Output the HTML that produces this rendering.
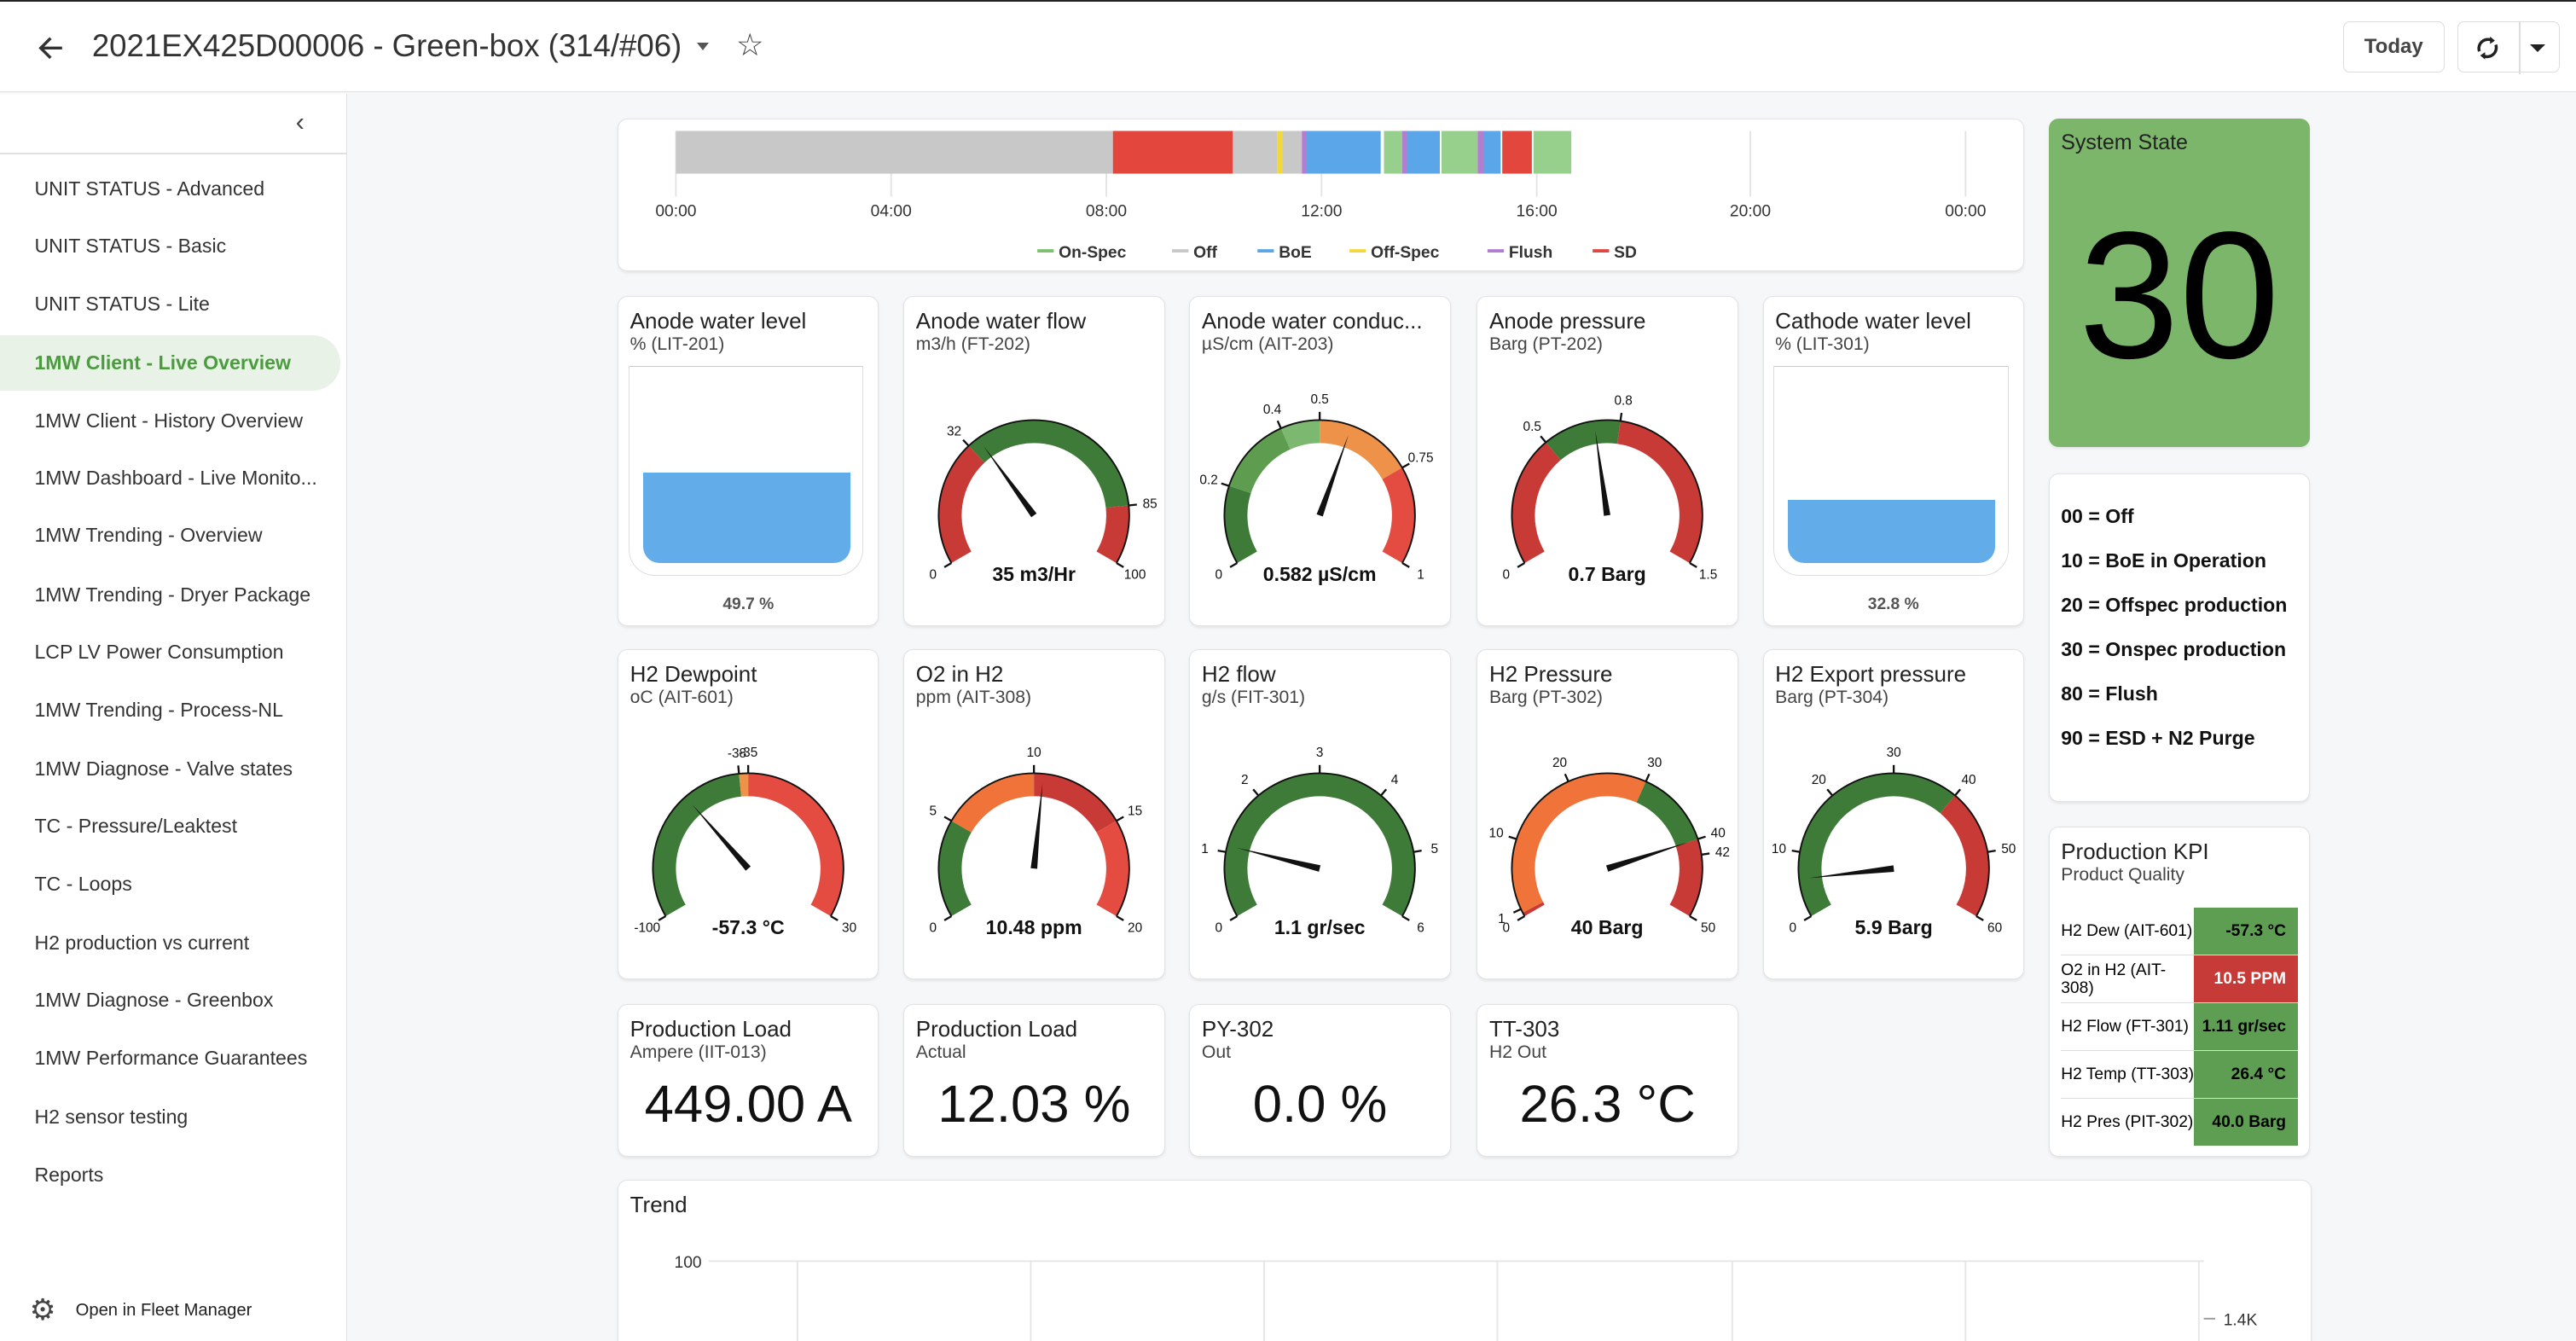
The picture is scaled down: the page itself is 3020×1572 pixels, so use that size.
<!DOCTYPE html>
<html><head><meta charset="utf-8">
<style>
html,body{margin:0;padding:0;}
body{width:3020px;height:1572px;overflow:hidden;background:#f6f7f9;font-family:"Liberation Sans",sans-serif;}
#z{zoom:1.92602;width:1568px;height:816px;position:relative;overflow:hidden;background:#f6f7f9;}
.abs{position:absolute;}
.hdr{left:0;top:0;width:1568px;height:56px;background:#fff;border-top:1.5px solid #222;border-bottom:1px solid #e0e0e0;box-sizing:border-box;}
.side{left:0;top:57px;width:211px;height:760px;background:#fff;border-right:1px solid #e0e0e0;}
.side .it{position:absolute;left:21px;font-size:12px;color:#333;}
.card{position:absolute;background:#fff;border:1px solid #e2e3e6;border-radius:6px;box-shadow:0 1px 2px rgba(0,0,0,.08);box-sizing:border-box;}
.t{position:absolute;left:7px;top:7px;font-size:13.5px;color:#222;white-space:nowrap;}
.s{position:absolute;left:7px;top:23px;font-size:11px;color:#444;white-space:nowrap;}
.big{position:absolute;left:0;width:100%;text-align:center;top:42px;font-size:32px;color:#111;}
.leg div{font-size:12px;font-weight:bold;color:#111;position:absolute;left:7px;}
table{border-collapse:collapse;table-layout:fixed;}
td{padding:0;}
td.v{font-weight:bold;text-align:right;padding-right:7px;background:#5d9e52;}
</style></head><body><div id="z">
<div class="abs hdr">
 <svg class="abs" style="left:22px;top:19px" width="18" height="18" viewBox="0 0 18 18"><path d="M16 9H3M9 3L3 9l6 6" stroke="#333" stroke-width="1.8" fill="none"/></svg>
 <div class="abs" style="left:56px;top:16px;font-size:19px;color:#333;">2021EX425D00006 - Green-box (314/#06)</div>
 <div class="abs" style="left:424px;top:25px;width:0;height:0;border-left:4px solid transparent;border-right:4px solid transparent;border-top:5px solid #555;"></div>
 <div class="abs" style="left:448px;top:15px;font-size:19px;color:#444;">☆</div>
 <div class="abs" style="left:1426px;top:12px;width:61px;height:30px;border:1px solid #ddd;border-radius:4px;font-size:12.5px;font-weight:bold;color:#444;text-align:center;line-height:30px;">Today</div>
 <div class="abs" style="left:1496px;top:12px;width:61px;height:30px;border:1px solid #ddd;border-radius:4px;"></div>
 <div class="abs" style="left:1533px;top:12px;width:1px;height:32px;background:#ddd;"></div>
 <svg class="abs" style="left:1505px;top:19px" width="18" height="18" viewBox="0 0 18 18"><path d="M4 11A5.5 5.5 0 0 1 12 4.5M14 7A5.5 5.5 0 0 1 6 13.5" stroke="#222" stroke-width="1.8" fill="none"/><path d="M10.5 2l3 2.5-3 2z M7.5 16l-3-2.5 3-2z" fill="#222"/></svg>
 <div class="abs" style="left:1540px;top:26px;width:0;height:0;border-left:5px solid transparent;border-right:5px solid transparent;border-top:5px solid #222;"></div>
</div>
<div class="abs side">
 <div class="abs" style="left:180px;top:8px;font-size:16px;color:#444;">‹</div>
 <div class="abs" style="left:0;top:36px;width:211px;height:1px;background:#e0e0e0;"></div>
 <div class="abs" style="left:0;top:147px;width:207px;height:34px;background:#e8f2e6;border-radius:0 17px 17px 0;"></div>
 <div class="it" style="top:51px">UNIT STATUS - Advanced</div>
 <div class="it" style="top:86px">UNIT STATUS - Basic</div>
 <div class="it" style="top:121px">UNIT STATUS - Lite</div>
 <div class="it" style="top:157px;color:#4a9c3e;font-weight:bold">1MW Client - Live Overview</div>
 <div class="it" style="top:192px">1MW Client - History Overview</div>
 <div class="it" style="top:227px">1MW Dashboard - Live Monito...</div>
 <div class="it" style="top:262px">1MW Trending - Overview</div>
 <div class="it" style="top:298px">1MW Trending - Dryer Package</div>
 <div class="it" style="top:333px">LCP LV Power Consumption</div>
 <div class="it" style="top:368px">1MW Trending - Process-NL</div>
 <div class="it" style="top:404px">1MW Diagnose - Valve states</div>
 <div class="it" style="top:439px">TC - Pressure/Leaktest</div>
 <div class="it" style="top:474px">TC - Loops</div>
 <div class="it" style="top:510px">H2 production vs current</div>
 <div class="it" style="top:545px">1MW Diagnose - Greenbox</div>
 <div class="it" style="top:580px">1MW Performance Guarantees</div>
 <div class="it" style="top:616px">H2 sensor testing</div>
 <div class="it" style="top:651px">Reports</div>
 <div class="abs" style="left:18px;top:730px;font-size:18px;color:#444;">⚙</div>
 <div class="abs" style="left:46px;top:735px;font-size:10.5px;color:#222;">Open in Fleet Manager</div>
</div>

<!-- timeline -->
<div class="card" style="left:376px;top:72px;width:856px;height:93px;">
<svg class="abs" style="left:0;top:0" width="856" height="93">
 <g stroke="#e4e4e4" stroke-width="1">
  <line x1="35" y1="7" x2="35" y2="47"/><line x1="166" y1="7" x2="166" y2="47"/><line x1="297" y1="7" x2="297" y2="47"/><line x1="428" y1="7" x2="428" y2="47"/><line x1="559" y1="7" x2="559" y2="47"/><line x1="689" y1="7" x2="689" y2="47"/><line x1="820" y1="7" x2="820" y2="47"/>
 </g>
 <g>
  <rect x="35" y="7" width="266" height="26" fill="#c8c8c8"/>
  <rect x="301" y="7" width="73" height="26" fill="#e2463d"/>
  <rect x="374" y="7" width="27" height="26" fill="#c8c8c8"/>
  <rect x="401" y="7" width="3" height="26" fill="#f3d83c"/>
  <rect x="404" y="7" width="12" height="26" fill="#c8c8c8"/>
  <rect x="416" y="7" width="3" height="26" fill="#b27fd0"/>
  <rect x="419" y="7" width="45" height="26" fill="#5aa6e8"/>
  <rect x="466" y="7" width="11" height="26" fill="#96d08c"/>
  <rect x="477" y="7" width="3" height="26" fill="#b27fd0"/>
  <rect x="480" y="7" width="20" height="26" fill="#5aa6e8"/>
  <rect x="501" y="7" width="22" height="26" fill="#96d08c"/>
  <rect x="523" y="7" width="4" height="26" fill="#b27fd0"/>
  <rect x="527" y="7" width="10" height="26" fill="#5aa6e8"/>
  <rect x="538" y="7" width="18" height="26" fill="#e2463d"/>
  <rect x="557" y="7" width="23" height="26" fill="#96d08c"/>
 </g>
 <g font-size="10" fill="#333" text-anchor="middle">
  <text x="35" y="59">00:00</text><text x="166" y="59">04:00</text><text x="297" y="59">08:00</text><text x="428" y="59">12:00</text><text x="559" y="59">16:00</text><text x="689" y="59">20:00</text><text x="820" y="59">00:00</text>
 </g>
 <g font-size="10" font-weight="bold" fill="#333">
  <line x1="255" y1="80" x2="265" y2="80" stroke="#7cc16e" stroke-width="2"/><text x="268" y="84">On-Spec</text>
  <line x1="337" y1="80" x2="347" y2="80" stroke="#c8c8c8" stroke-width="2"/><text x="350" y="84">Off</text>
  <line x1="389" y1="80" x2="399" y2="80" stroke="#5aa6e8" stroke-width="2"/><text x="402" y="84">BoE</text>
  <line x1="445" y1="80" x2="455" y2="80" stroke="#f3d83c" stroke-width="2"/><text x="458" y="84">Off-Spec</text>
  <line x1="529" y1="80" x2="539" y2="80" stroke="#b27fd0" stroke-width="2"/><text x="542" y="84">Flush</text>
  <line x1="593" y1="80" x2="603" y2="80" stroke="#e2463d" stroke-width="2"/><text x="606" y="84">SD</text>
 </g>
</svg>
</div>

<!-- system state -->
<div class="card" style="left:1247px;top:72px;width:159px;height:200px;background:#7bb66b;border-color:#7bb66b;">
 <div class="t" style="font-size:13px">System State</div>
 <div class="abs" style="left:0;width:100%;text-align:center;top:42px;font-size:110px;color:#000;line-height:130px;">30</div>
</div>
<div class="card leg" style="left:1247px;top:288px;width:159px;height:200px;">
 <div style="top:19px">00 = Off</div><div style="top:46px">10 = BoE in Operation</div><div style="top:73px">20 = Offspec production</div><div style="top:100px">30 = Onspec production</div><div style="top:127px">80 = Flush</div><div style="top:154px">90 = ESD + N2 Purge</div>
</div>
<div class="card" style="left:1247px;top:503px;width:159px;height:201px;">
 <div class="t">Production KPI</div><div class="s">Product Quality</div>
 <table class="abs" style="left:7px;top:49px;width:144px;font-size:10px;line-height:11px;">
  <colgroup><col style="width:81px"><col style="width:63px"></colgroup>
  <tr style="height:29px;border-bottom:1px solid #ddd"><td>H2 Dew (AIT-601)</td><td class="v">-57.3 °C</td></tr>
  <tr style="height:29px;border-bottom:1px solid #ddd"><td>O2 in H2 (AIT-308)</td><td class="v" style="background:#c63a37;color:#fff;">10.5 PPM</td></tr>
  <tr style="height:29px;border-bottom:1px solid #ddd"><td>H2 Flow (FT-301)</td><td class="v">1.11 gr/sec</td></tr>
  <tr style="height:29px;border-bottom:1px solid #ddd"><td>H2 Temp (TT-303)</td><td class="v">26.4 °C</td></tr>
  <tr style="height:29px"><td>H2 Pres (PIT-302)</td><td class="v">40.0 Barg</td></tr>
 </table>
</div>

<!-- row1 -->
<div class="card" style="left:376px;top:180px;width:159px;height:201px;"><div class="t">Anode water level</div><div class="s">% (LIT-201)</div>
 <div class="abs" style="left:6px;top:42px;width:143px;height:128px;border:1px solid #ddd;border-top-color:#ccc;border-radius:0 0 16px 16px;box-sizing:border-box;"></div>
 <div class="abs" style="left:15px;top:107px;width:126px;height:55px;background:#62acea;border-radius:0 0 10px 10px;"></div>
 <div class="abs" style="left:0;width:100%;text-align:center;top:182px;font-size:10px;color:#555;font-weight:bold">49.7 %</div></div>
<div class="card" id="g1" style="left:550px;top:180px;width:159px;height:201px;"><div class="t">Anode water flow</div><div class="s">m3/h (FT-202)</div></div>
<div class="card" id="g2" style="left:724px;top:180px;width:159px;height:201px;"><div class="t">Anode water conduc...</div><div class="s">µS/cm (AIT-203)</div></div>
<div class="card" id="g3" style="left:899px;top:180px;width:159px;height:201px;"><div class="t">Anode pressure</div><div class="s">Barg (PT-202)</div></div>
<div class="card" style="left:1073px;top:180px;width:159px;height:201px;"><div class="t">Cathode water level</div><div class="s">% (LIT-301)</div>
 <div class="abs" style="left:6px;top:42px;width:143px;height:128px;border:1px solid #ddd;border-top-color:#ccc;border-radius:0 0 16px 16px;box-sizing:border-box;"></div>
 <div class="abs" style="left:15px;top:124px;width:126px;height:38px;background:#62acea;border-radius:0 0 10px 10px;"></div>
 <div class="abs" style="left:0;width:100%;text-align:center;top:182px;font-size:10px;color:#555;font-weight:bold">32.8 %</div></div>
<!-- row2 -->
<div class="card" id="g4" style="left:376px;top:395px;width:159px;height:201px;"><div class="t">H2 Dewpoint</div><div class="s">oC (AIT-601)</div></div>
<div class="card" id="g5" style="left:550px;top:395px;width:159px;height:201px;"><div class="t">O2 in H2</div><div class="s">ppm (AIT-308)</div></div>
<div class="card" id="g6" style="left:724px;top:395px;width:159px;height:201px;"><div class="t">H2 flow</div><div class="s">g/s (FIT-301)</div></div>
<div class="card" id="g7" style="left:899px;top:395px;width:159px;height:201px;"><div class="t">H2 Pressure</div><div class="s">Barg (PT-302)</div></div>
<div class="card" id="g8" style="left:1073px;top:395px;width:159px;height:201px;"><div class="t">H2 Export pressure</div><div class="s">Barg (PT-304)</div></div>
<!-- row3 -->
<div class="card" style="left:376px;top:611px;width:159px;height:93px;"><div class="t">Production Load</div><div class="s">Ampere (IIT-013)</div><div class="big">449.00 A</div></div>
<div class="card" style="left:550px;top:611px;width:159px;height:93px;"><div class="t">Production Load</div><div class="s">Actual</div><div class="big">12.03 %</div></div>
<div class="card" style="left:724px;top:611px;width:159px;height:93px;"><div class="t">PY-302</div><div class="s">Out</div><div class="big">0.0 %</div></div>
<div class="card" style="left:899px;top:611px;width:159px;height:93px;"><div class="t">TT-303</div><div class="s">H2 Out</div><div class="big">26.3 °C</div></div>
<!-- trend -->
<div class="card" style="left:376px;top:718px;width:1031px;height:120px;"><div class="t">Trend</div>
<svg class="abs" style="left:0;top:0" width="1031" height="120">
 <text x="34" y="53" font-size="10" fill="#333">100</text>
 <line x1="55" y1="49" x2="965" y2="49" stroke="#e6e6e6"/>
 <g stroke="#e6e6e6"><line x1="109" y1="49" x2="109" y2="120"/><line x1="251" y1="49" x2="251" y2="120"/><line x1="393" y1="49" x2="393" y2="120"/><line x1="535" y1="49" x2="535" y2="120"/><line x1="678" y1="49" x2="678" y2="120"/><line x1="820" y1="49" x2="820" y2="120"/><line x1="962" y1="49" x2="962" y2="120"/></g>
 <line x1="965" y1="84" x2="972" y2="84" stroke="#999"/>
 <text x="977" y="88" font-size="10" fill="#333">1.4K</text>
</svg></div>

<script>
var G=[
 ["g1",133,0,100,[[0,32,"#c83a36"],[32,85,"#3f7b38"],[85,100,"#c83a36"]],35,[0,32,85,100],"35 m3/Hr"],
 ["g2",133,0,1,[[0,0.2,"#3f7b38"],[0.2,0.4,"#5e9d4f"],[0.4,0.5,"#7cb870"],[0.5,0.75,"#ef9249"],[0.75,1,"#e54c41"]],0.582,[0,0.2,0.4,0.5,0.75,1],"0.582 µS/cm"],
 ["g3",133,0,1.5,[[0,0.5,"#c83a36"],[0.5,0.8,"#3f7b38"],[0.8,1.5,"#c83a36"]],0.7,[0,0.5,0.8,1.5],"0.7 Barg"],
 ["g4",133,-100,30,[[-100,-38,"#3f7b38"],[-38,-35,"#ef9249"],[-35,30,"#e54c41"]],-57.3,[-100,-38,-35,30],"-57.3 °C"],
 ["g5",133,0,20,[[0,5,"#3f7b38"],[5,10,"#f0733a"],[10,15,"#c83a36"],[15,20,"#e54c41"]],10.48,[0,5,10,15,20],"10.48 ppm"],
 ["g6",133,0,6,[[0,6,"#3f7b38"]],1.1,[0,1,2,3,4,5,6],"1.1 gr/sec"],
 ["g7",133,0,50,[[0,0.5,"#c83a36"],[0.5,30,"#f0733a"],[30,40,"#3f7b38"],[40,50,"#c83a36"]],40,[0,1,10,20,30,40,42,50],"40 Barg"],
 ["g8",133,0,60,[[0,40,"#3f7b38"],[40,60,"#c83a36"]],5.9,[0,10,20,30,40,50,60],"5.9 Barg"]
];
function P(cx,cy,r,a){var t=(a-90)*Math.PI/180;return [cx+r*Math.cos(t),cy+r*Math.sin(t)];}
G.forEach(function(g){
 var el=document.getElementById(g[0]),cx=79,cy=g[1],R=58,r=44,min=g[2],max=g[3];
 function ang(v){return -120+240*(v-min)/(max-min);}
 var s='<svg style="position:absolute;left:0;top:0" width="159" height="201">';
 g[4].forEach(function(b){var a1=ang(b[0]),a2=ang(b[1]),l=(a2-a1)>180?1:0;var p1=P(cx,cy,R,a1),p2=P(cx,cy,R,a2),p3=P(cx,cy,r,a2),p4=P(cx,cy,r,a1);
  s+='<path d="M'+p1+'A'+R+' '+R+' 0 '+l+' 1 '+p2+'L'+p3+'A'+r+' '+r+' 0 '+l+' 0 '+p4+'Z" fill="'+b[2]+'"/>';});
 var a0=P(cx,cy,R,-120),a9=P(cx,cy,R,120);
 s+='<path d="M'+a0+'A'+R+' '+R+' 0 1 1 '+a9+'" fill="none" stroke="#111" stroke-width="1"/>';
 g[6].forEach(function(v){var a=ang(v),q1=P(cx,cy,R,a),q2=P(cx,cy,R+5,a),q3=P(cx,cy,R+13,a);
  s+='<line x1="'+q1[0]+'" y1="'+q1[1]+'" x2="'+q2[0]+'" y2="'+q2[1]+'" stroke="#111" stroke-width="1.2"/>';
  s+='<text x="'+q3[0]+'" y="'+(q3[1]+3)+'" font-size="8" text-anchor="middle" fill="#111">'+v+'</text>';});
 var na=ang(g[5]),tip=P(cx,cy,R-6,na),b1=P(cx,cy,2,na+90),b2=P(cx,cy,2,na-90);
 s+='<path d="M'+tip+'L'+b1+'L'+b2+'Z" fill="#111"/>';
 s+='<text x="'+cx+'" y="'+(cy+40)+'" font-size="12" font-weight="bold" text-anchor="middle" fill="#111">'+g[7]+'</text></svg>';
 el.insertAdjacentHTML('beforeend',s);
});
</script>
</div></body></html>
